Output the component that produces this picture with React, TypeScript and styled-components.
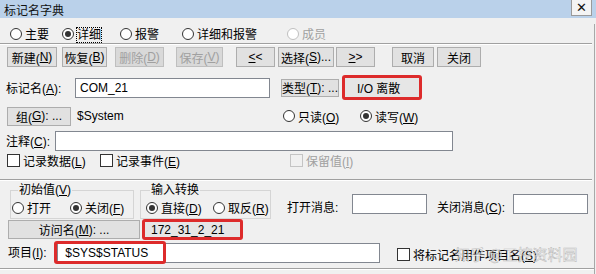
import React from 'react';
import styled, { createGlobalStyle } from 'styled-components';

const GlobalStyle = createGlobalStyle`
  html, body {
    margin: 0;
    padding: 0;
    background: #f0f0f0;
  }
  body {
    font-family: "Liberation Sans", "Noto Sans CJK SC", sans-serif;
    font-size: 12px;
    color: #000;
  }
`;

const Dialog = styled.div`
  position: relative;
  width: 596px;
  height: 274px;
  overflow: hidden;
  background: #f0f0f0;
`;

const TitleBar = styled.div`
  height: 18px;
  display: flex;
  align-items: center;
  padding-left: 4px;
  background: #bad1ea;
  color: #111;
  font-size: 12px;
`;

const Title = styled.div`
  flex: 1;
`;

const CloseBox = styled.div`
  align-self: flex-start;
  width: 19px;
  height: 15px;
  margin-right: 4px;
  display: grid;
  place-items: center;
  background: #f4f4f4;
  border: 1px solid #9a9a9a;
  border-top: none;
  font-family: "DejaVu Sans", sans-serif;
  font-weight: bold;
  font-size: 13px;
  line-height: 1;
`;

const Body = styled.div`
  width: 594px;
  height: 256px;
  border-right: 1px solid #a8a8a8;
`;

const Row = styled.div<{ $top: number; $h: number; $align?: string }>`
  display: flex;
  align-items: ${(p) => p.$align || 'center'};
  height: ${(p) => p.$h}px;
  margin-top: ${(p) => p.$top}px;
`;

const Separator = styled.div<{ $top: number; $w?: number }>`
  margin-top: ${(p) => p.$top}px;
  width: ${(p) => p.$w || 592}px;
  border-top: 1px solid #a0a0a0;
  border-bottom: 1px solid #ffffff;
`;

const U = styled.span`
  text-decoration: underline;
`;

const Item = styled.div<{ $ml?: number; $w?: number; $disabled?: boolean }>`
  display: flex;
  align-items: center;
  gap: 3px;
  margin-left: ${(p) => p.$ml || 0}px;
  width: ${(p) => (p.$w ? `${p.$w}px` : 'auto')};
  flex-shrink: 0;
  white-space: nowrap;
  color: ${(p) => (p.$disabled ? '#a0a0a0' : '#000')};
`;

const Circle = styled.span<{ $on?: boolean; $disabled?: boolean }>`
  width: 12px;
  height: 12px;
  box-sizing: border-box;
  border-radius: 50%;
  border: 1px solid ${(p) => (p.$disabled ? '#c0c0c0' : '#333')};
  background: #fff;
  display: grid;
  place-items: center;
  flex-shrink: 0;
  &::after {
    content: '';
    width: 6px;
    height: 6px;
    border-radius: 50%;
    background: ${(p) => (p.$on ? '#333' : 'transparent')};
  }
`;

const Box = styled.span<{ $disabled?: boolean }>`
  width: 13px;
  height: 13px;
  box-sizing: border-box;
  border: 1px solid ${(p) => (p.$disabled ? '#c4c4c4' : '#333')};
  background: ${(p) => (p.$disabled ? '#f0f0f0' : '#fff')};
  flex-shrink: 0;
`;

const Focus = styled.span`
  outline: 1px dotted #000;
  outline-offset: 0px;
`;

const Btn = styled.div<{ $ml?: number; $w: number; $h?: number; $disabled?: boolean }>`
  margin-left: ${(p) => p.$ml || 0}px;
  width: ${(p) => p.$w}px;
  height: ${(p) => p.$h || 20}px;
  box-sizing: border-box;
  flex-shrink: 0;
  display: flex;
  align-items: center;
  justify-content: center;
  white-space: nowrap;
  background: ${(p) => (p.$disabled ? '#d9d9d9' : '#e1e1e1')};
  border: 1px solid ${(p) => (p.$disabled ? '#bfbfbf' : '#adadad')};
  color: ${(p) => (p.$disabled ? '#a0a0a0' : '#000')};
`;

const Label = styled.div<{ $ml?: number; $w?: number; $mt?: number; $self?: string }>`
  margin-left: ${(p) => p.$ml || 0}px;
  margin-top: ${(p) => p.$mt || 0}px;
  align-self: ${(p) => p.$self || 'auto'};
  width: ${(p) => (p.$w ? `${p.$w}px` : 'auto')};
  flex-shrink: 0;
  white-space: nowrap;
`;

const Field = styled.div<{ $ml?: number; $w: number; $h?: number; $mt?: number }>`
  margin-left: ${(p) => p.$ml || 0}px;
  margin-top: ${(p) => p.$mt || 0}px;
  width: ${(p) => p.$w}px;
  height: ${(p) => p.$h || 20}px;
  box-sizing: border-box;
  flex-shrink: 0;
  display: flex;
  align-items: center;
  padding-left: 4px;
  background: #fff;
  border: 1px solid #828790;
  position: relative;
`;

const Marked = styled.div<{ $ml?: number; $w: number; $h: number; $pl: number }>`
  margin-left: ${(p) => p.$ml || 0}px;
  width: ${(p) => p.$w}px;
  height: ${(p) => p.$h}px;
  box-sizing: border-box;
  flex-shrink: 0;
  display: flex;
  align-items: center;
  padding-left: ${(p) => p.$pl}px;
  background: #e6e6e6;
  border: 3px solid #dd2b2b;
  border-radius: 3px;
`;

const MarkOverlay = styled.div`
  position: absolute;
  left: -4px;
  top: -3px;
  width: 112px;
  height: 23px;
  box-sizing: border-box;
  border: 3px solid #dd2b2b;
  border-radius: 3px;
`;

const Group = styled.fieldset<{ $ml: number; $w: number }>`
  margin: 0 0 0 ${(p) => p.$ml}px;
  padding: 0;
  width: ${(p) => p.$w}px;
  height: 36px;
  box-sizing: border-box;
  flex-shrink: 0;
  border: 1px solid #d5d5d5;
  display: flex;
  align-items: center;
`;

const Caption = styled.legend<{ $ml: number }>`
  margin-left: ${(p) => p.$ml}px;
  padding: 0 1px;
  line-height: 14px;
  font-size: 12px;
`;

const Watermark = styled.div`
  position: absolute;
  left: 455px;
  top: 243px;
  font-family: "Noto Sans CJK SC", sans-serif;
  font-size: 15px;
  color: rgba(255, 255, 255, 0.75);
  -webkit-text-stroke: 0.5px rgba(120, 120, 120, 0.5);
  pointer-events: none;
  white-space: nowrap;
`;

const Radio = ({ on, children, ml, w, disabled }: { on?: boolean; children: React.ReactNode; ml?: number; w?: number; disabled?: boolean }) => (
  <Item $ml={ml} $w={w} $disabled={disabled}>
    <Circle $on={on} $disabled={disabled} />
    <span>{children}</span>
  </Item>
);

const Check = ({ children, ml, w, disabled }: { children: React.ReactNode; ml?: number; w?: number; disabled?: boolean }) => (
  <Item $ml={ml} $w={w} $disabled={disabled}>
    <Box $disabled={disabled} />
    <span>{children}</span>
  </Item>
);

export default function App() {
  return (
    <Dialog>
      <GlobalStyle />
      <TitleBar>
        <Title>标记名字典</Title>
        <CloseBox>✕</CloseBox>
      </TitleBar>
      <Body>
        <Row $top={6} $h={19}>
          <Radio ml={10} w={52}>主要</Radio>
          <Radio on w={58}>
            <Focus>详细</Focus>
          </Radio>
          <Radio w={62}>报警</Radio>
          <Radio w={105}>详细和报警</Radio>
          <Radio disabled>成员</Radio>
        </Row>
        <Separator $top={0} />

        <Row $top={2} $h={20}>
          <Btn $ml={7} $w={50}>新建(<U>N</U>)</Btn>
          <Btn $ml={5} $w={45}>恢复(<U>B</U>)</Btn>
          <Btn $ml={8} $w={49} $disabled>删除(<U>D</U>)</Btn>
          <Btn $ml={12} $w={47} $disabled>保存(<U>V</U>)</Btn>
          <Btn $ml={13} $w={39}><U>&lt;</U>&lt;</Btn>
          <Btn $ml={3} $w={56}>选择(<U>S</U>)...</Btn>
          <Btn $ml={2} $w={39}><U>&gt;</U>&gt;</Btn>
          <Btn $ml={17} $w={42}>取消</Btn>
          <Btn $ml={3} $w={44}>关闭</Btn>
        </Row>

        <Row $top={8} $h={25}>
          <Label $ml={6} $w={69}>标记名(<U>A</U>):</Label>
          <Field $w={195}>COM_21</Field>
          <Btn $ml={11} $w={58} $h={18}>类型(<U>T</U>): ...</Btn>
          <Marked $ml={3} $w={80} $h={25} $pl={12}>I/O 离散</Marked>
        </Row>

        <Row $top={6} $h={20}>
          <Btn $ml={7} $w={64} $h={19}>组(<U>G</U>): ...</Btn>
          <Label $ml={6} $w={206}>$System</Label>
          <Radio w={77}>只读(<U>O</U>)</Radio>
          <Radio on>读写(<U>W</U>)</Radio>
        </Row>

        <Row $top={4} $h={21}>
          <Label $ml={6} $w={49}>注释(<U>C</U>):</Label>
          <Field $w={398} $h={20} />
        </Row>

        <Row $top={1} $h={16}>
          <Check ml={7} w={93}>记录数据(<U>L</U>)</Check>
          <Check w={190}>记录事件(<U>E</U>)</Check>
          <Check disabled>保留值(<U>I</U>)</Check>
        </Row>
        <Separator $top={11} />

        <Row $top={2} $h={36} $align="flex-start">
          <Group $ml={10} $w={124}>
            <Caption $ml={7}>初始值(<U>V</U>)</Caption>
            <Radio ml={1} w={58}>打开</Radio>
            <Radio on>关闭(<U>F</U>)</Radio>
          </Group>
          <Group $ml={6} $w={131}>
            <Caption $ml={9}>输入转换</Caption>
            <Radio on ml={5} w={67}>直接(<U>D</U>)</Radio>
            <Radio>取反(<U>R</U>)</Radio>
          </Group>
          <Label $ml={16} $w={65} $mt={15}>打开消息:</Label>
          <Field $w={75} $mt={11} />
          <Label $ml={10} $w={76} $mt={15}>关闭消息(<U>C</U>):</Label>
          <Field $w={75} $mt={11} />
        </Row>

        <Row $top={0} $h={21}>
          <Btn $ml={8} $w={132} $h={19}>访问名(<U>M</U>): ...</Btn>
          <Marked $ml={2} $w={101} $h={21} $pl={6}>172_31_2_21</Marked>
        </Row>

        <Row $top={0} $h={23} $align="flex-end">
          <Label $ml={8} $w={49} $self="center">项目(<U>I</U>):</Label>
          <Field $w={323} $h={20}>
            &nbsp;$SYS$STATUS
            <MarkOverlay />
          </Field>
          <Check ml={17} w={180}>将标记名用作项目名(<U>S</U>)</Check>
        </Row>
        <Separator $top={5} $w={594} />
      </Body>
      <Watermark>知乎 @工控资料园</Watermark>
    </Dialog>
  );
}
